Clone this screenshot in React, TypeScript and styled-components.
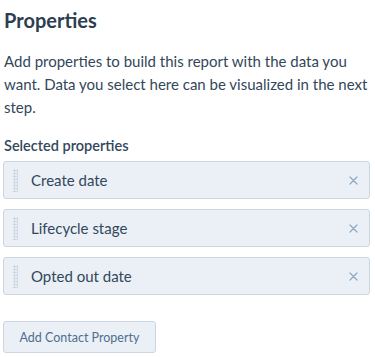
import React from "react";
import styled, { createGlobalStyle } from "styled-components";

const Global = createGlobalStyle`
  html, body { margin: 0; padding: 0; background: #ffffff; }
  body { font-family: "Lato", "Noto Sans", sans-serif; color: #33475b; }
`;

const Panel = styled.div`
  display: flex;
  flex-direction: column;
  padding: 5px 5px 0 3px;
`;

const Title = styled.h2`
  margin: 0;
  padding-left: 1px;
  font-size: 20px;
  line-height: 30px;
  font-weight: 700;
  color: #2d3e50;
`;

const Description = styled.p`
  margin: 15px 0 0;
  padding-left: 1px;
  font-size: 15px;
  line-height: 23px;
  color: #33475b;
`;

const SectionLabel = styled.h3`
  margin: 17px 0 0;
  padding-left: 1px;
  font-size: 14.5px;
  line-height: 20px;
  font-weight: 600;
  color: #33475b;
`;

const List = styled.ul`
  list-style: none;
  margin: 5px 0 0;
  padding: 0;
  display: flex;
  flex-direction: column;
  gap: 10px;
`;

const Row = styled.li`
  display: flex;
  align-items: center;
  height: 38px;
  box-sizing: border-box;
  border: 1px solid #cbd6e2;
  border-radius: 3px;
  background: #eaf0f6;
  padding: 0 11px 0 9px;
`;

const Handle = styled.span`
  width: 5px;
  height: 23px;
  flex: none;
  background-image: radial-gradient(circle, #cfd9e4 1px, transparent 1.1px);
  background-size: 3px 3px;
  background-position: 0 0;
`;

const RowLabel = styled.span`
  flex: 1;
  margin-left: 13px;
  font-size: 15px;
  color: #33475b;
`;

const Remove = styled.button`
  border: 0;
  background: transparent;
  padding: 0;
  width: 10px;
  height: 10px;
  display: flex;
  align-items: center;
  justify-content: center;
  cursor: pointer;
`;

const AddButton = styled.button`
  align-self: flex-start;
  margin-top: 26px;
  height: 32px;
  width: 153px;
  box-sizing: border-box;
  border: 1px solid #cbd6e2;
  border-radius: 3px;
  background: #eaf0f6;
  color: #506e91;
  font-family: "Lato", "Noto Sans", sans-serif;
  font-size: 12.5px;
  padding: 0;
`;

const CloseIcon = () => (
  <svg width="9" height="9" viewBox="0 0 9 9">
    <path d="M1 1 L8 8 M8 1 L1 8" stroke="#8fa7c0" strokeWidth="1.2" strokeLinecap="round" />
  </svg>
);

const items = ["Create date", "Lifecycle stage", "Opted out date"];

export default function App() {
  return (
    <>
      <Global />
      <Panel>
        <Title>Properties</Title>
        <Description>
          Add properties to build this report with the data you want. Data you select here can be visualized in the next step.
        </Description>
        <SectionLabel>Selected properties</SectionLabel>
        <List>
          {items.map((it) => (
            <Row key={it}>
              <Handle />
              <RowLabel>{it}</RowLabel>
              <Remove aria-label="Remove">
                <CloseIcon />
              </Remove>
            </Row>
          ))}
        </List>
        <AddButton>Add Contact Property</AddButton>
      </Panel>
    </>
  );
}
